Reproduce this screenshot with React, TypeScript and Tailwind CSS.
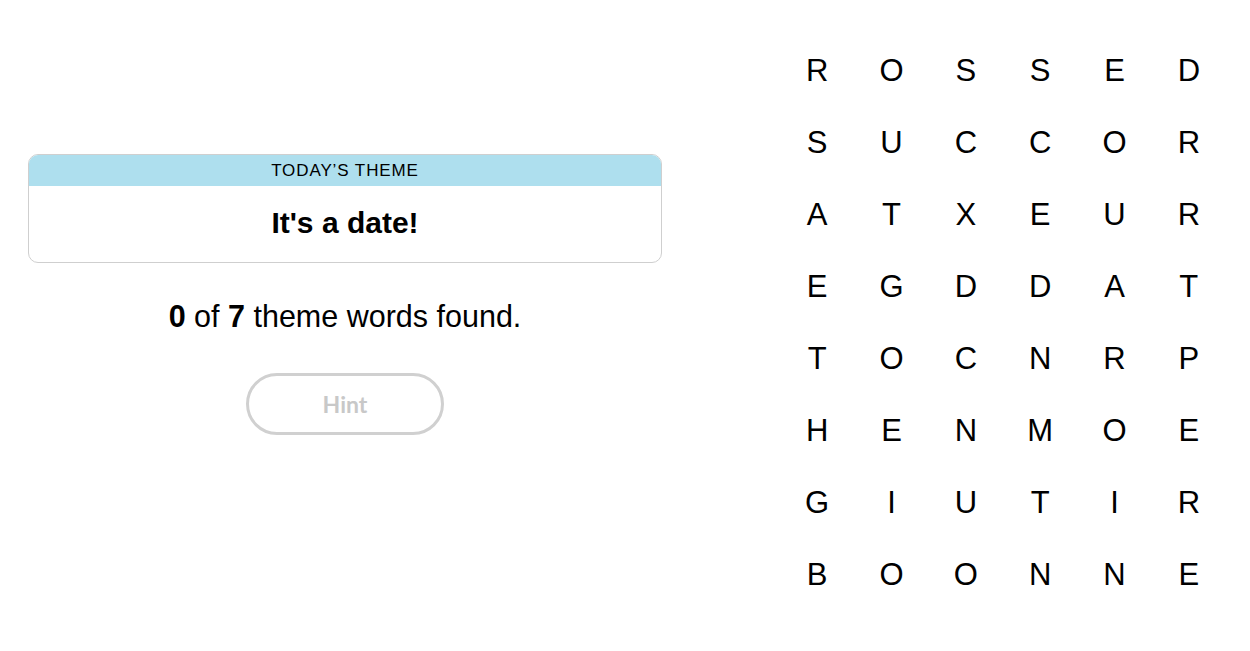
import React from "react";

const rows = [
  "ROSSED",
  "SUCCOR",
  "ATXEUR",
  "EGDDAT",
  "TOCNRP",
  "HENMOE",
  "GIUTIR",
  "BOONNE",
];

export default function App() {
  return (
    <div className="w-[1250px] h-[651px] bg-white flex flex-row text-black" style={{ fontFamily: '"Liberation Sans", Arial, sans-serif' }}>
      <div className="w-[690px] px-[28px] pt-[154px] flex flex-col items-center">
        <div className="w-full rounded-[10px] border border-[#cfcfcf] overflow-hidden">
          <div className="h-[31px] bg-[#aedfee] flex items-center justify-center text-[17px] tracking-[0.9px] leading-none">
            TODAY’S THEME
          </div>
          <div className="h-[76px] flex items-center justify-center font-bold text-[30px] leading-none pb-[2px]">
            It's a date!
          </div>
        </div>
        <div className="mt-[36px] text-[30.5px] leading-[34px]">
          <span className="font-bold">0</span> of <span className="font-bold">7</span> theme words found.
        </div>
        <button
          className="mt-[40px] w-[198px] h-[62px] rounded-full border-[3px] border-[#d0d0d0] text-[#c8c8c8] font-bold text-[23px] flex items-center justify-center"
          style={{ fontFamily: 'Lato, "Liberation Sans", sans-serif' }}
        >
          Hint
        </button>
      </div>
      <div className="ml-[90px] pt-[34px] grid grid-cols-6 w-[446px] auto-rows-[72px]">
        {rows.flatMap((r, i) =>
          r.split("").map((c, j) => (
            <div key={`${i}-${j}`} className="flex items-center justify-center text-[31px] leading-none">
              {c}
            </div>
          ))
        )}
      </div>
    </div>
  );
}
